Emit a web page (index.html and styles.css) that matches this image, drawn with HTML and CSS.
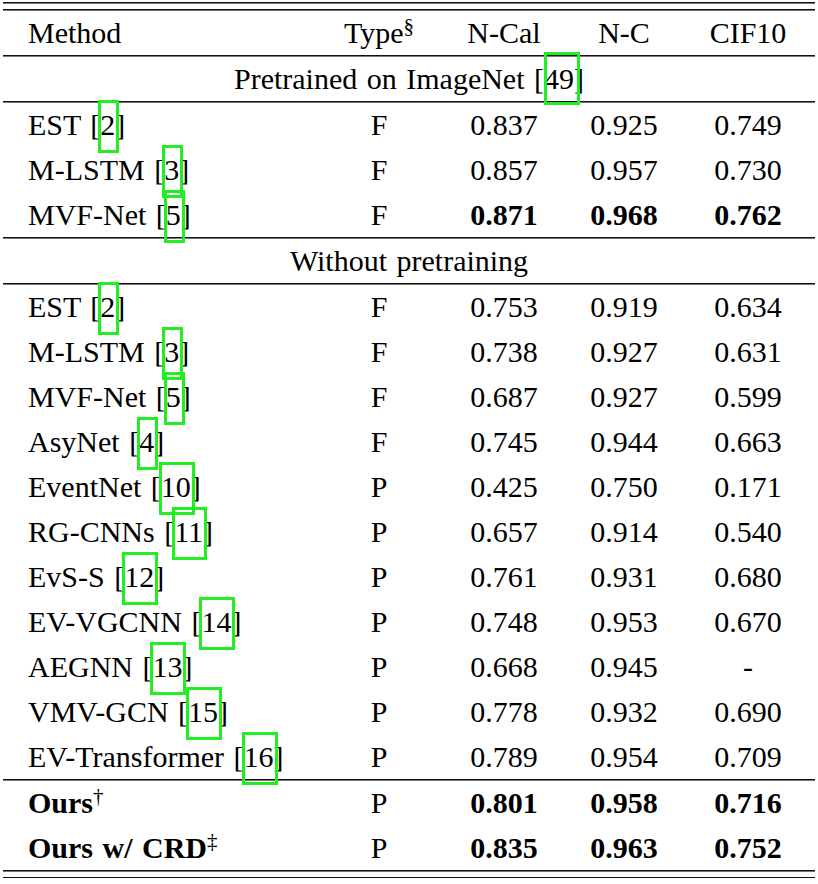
FILE: index.html
```html
<!DOCTYPE html>
<html>
<head>
<meta charset="utf-8">
<link rel="stylesheet" href="styles.css">
</head>
<body>
<div class="table">
  <div class="rule top"></div>
  <div class="rule second"></div>
  <div class="row">
    <div class="c m">Method</div>
    <div class="c">Type<sup>§</sup></div>
    <div class="c">N-Cal</div>
    <div class="c">N-C</div>
    <div class="c">CIF10</div>
  </div>
  <div class="rule"></div>
  <div class="row">
    <div class="c full">Pretrained on ImageNet [<span class="cite wide">49</span>]</div>
  </div>
  <div class="rule"></div>
  <div class="row">
    <div class="c m">EST [<span class="cite">2</span>]</div>
    <div class="c">F</div><div class="c">0.837</div><div class="c">0.925</div><div class="c">0.749</div>
  </div>
  <div class="row">
    <div class="c m">M-LSTM [<span class="cite">3</span>]</div>
    <div class="c">F</div><div class="c">0.857</div><div class="c">0.957</div><div class="c">0.730</div>
  </div>
  <div class="row">
    <div class="c m">MVF-Net [<span class="cite">5</span>]</div>
    <div class="c">F</div><div class="c b">0.871</div><div class="c b">0.968</div><div class="c b">0.762</div>
  </div>
  <div class="rule"></div>
  <div class="row">
    <div class="c full">Without pretraining</div>
  </div>
  <div class="rule"></div>
  <div class="row">
    <div class="c m">EST [<span class="cite">2</span>]</div>
    <div class="c">F</div><div class="c">0.753</div><div class="c">0.919</div><div class="c">0.634</div>
  </div>
  <div class="row">
    <div class="c m">M-LSTM [<span class="cite">3</span>]</div>
    <div class="c">F</div><div class="c">0.738</div><div class="c">0.927</div><div class="c">0.631</div>
  </div>
  <div class="row">
    <div class="c m">MVF-Net [<span class="cite">5</span>]</div>
    <div class="c">F</div><div class="c">0.687</div><div class="c">0.927</div><div class="c">0.599</div>
  </div>
  <div class="row">
    <div class="c m">AsyNet [<span class="cite">4</span>]</div>
    <div class="c">F</div><div class="c">0.745</div><div class="c">0.944</div><div class="c">0.663</div>
  </div>
  <div class="row">
    <div class="c m">EventNet [<span class="cite">10</span>]</div>
    <div class="c">P</div><div class="c">0.425</div><div class="c">0.750</div><div class="c">0.171</div>
  </div>
  <div class="row">
    <div class="c m">RG-CNNs [<span class="cite">11</span>]</div>
    <div class="c">P</div><div class="c">0.657</div><div class="c">0.914</div><div class="c">0.540</div>
  </div>
  <div class="row">
    <div class="c m">EvS-S [<span class="cite">12</span>]</div>
    <div class="c">P</div><div class="c">0.761</div><div class="c">0.931</div><div class="c">0.680</div>
  </div>
  <div class="row">
    <div class="c m">EV-VGCNN [<span class="cite">14</span>]</div>
    <div class="c">P</div><div class="c">0.748</div><div class="c">0.953</div><div class="c">0.670</div>
  </div>
  <div class="row">
    <div class="c m">AEGNN [<span class="cite">13</span>]</div>
    <div class="c">P</div><div class="c">0.668</div><div class="c">0.945</div><div class="c">-</div>
  </div>
  <div class="row">
    <div class="c m">VMV-GCN [<span class="cite">15</span>]</div>
    <div class="c">P</div><div class="c">0.778</div><div class="c">0.932</div><div class="c">0.690</div>
  </div>
  <div class="row">
    <div class="c m">EV-Transformer [<span class="cite">16</span>]</div>
    <div class="c">P</div><div class="c">0.789</div><div class="c">0.954</div><div class="c">0.709</div>
  </div>
  <div class="rule"></div>
  <div class="row">
    <div class="c m"><b>Ours</b><sup>†</sup></div>
    <div class="c">P</div><div class="c b">0.801</div><div class="c b">0.958</div><div class="c b">0.716</div>
  </div>
  <div class="row">
    <div class="c m"><b>Ours w/ CRD</b><sup>‡</sup></div>
    <div class="c">P</div><div class="c b">0.835</div><div class="c b">0.963</div><div class="c b">0.752</div>
  </div>
  <div class="rule"></div>
  <div class="rule second"></div>
</div>
</body>
</html>
```

FILE: styles.css
```css
html, body {
  margin: 0;
  padding: 0;
  background: #fff;
}

body {
  font-family: "Liberation Serif", "Times New Roman", serif;
  font-size: 30px;
  color: #000;
}

.table {
  width: 812px;
  margin-left: 3px;
  padding-top: 2px;
}

.rule {
  height: 1px;
  background: #111;
  box-shadow: 0 1px 0 #777;
}

.rule.second {
  margin-top: 6px;
}

.row {
  display: grid;
  grid-template-columns: 327px 98px 152px 88px 147px;
  height: 45px;
  line-height: 45px;
}

.c {
  text-align: center;
  white-space: nowrap;
}

.c:nth-child(5) {
  padding-left: 13px;
}

.c.m {
  text-align: left;
  padding-left: 25px;
  word-spacing: 2px;
}

.c.full {
  grid-column: 1 / -1;
  padding-left: 0;
  word-spacing: 2px;
}

.b,
b {
  font-weight: bold;
}

sup {
  font-size: 21px;
  line-height: 0;
  vertical-align: 10px;
  font-weight: normal;
}

.cite {
  position: relative;
}

.cite::after {
  content: "";
  position: absolute;
  left: -2px;
  right: -4px;
  top: -8px;
  bottom: -12px;
  border: 3px solid #22ee22;
}

.cite.wide::after {
  left: 0;
  right: -6px;
  top: -10px;
  bottom: -10px;
}
```
